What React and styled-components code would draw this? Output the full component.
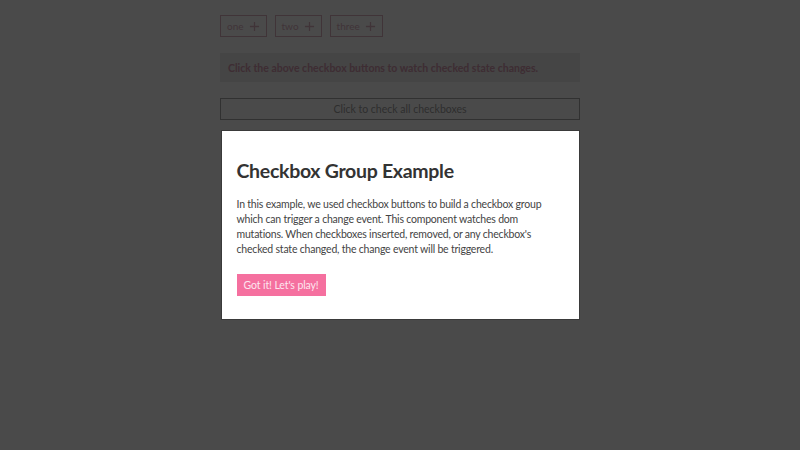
import React from 'react'
import styled, { createGlobalStyle } from 'styled-components'

const GlobalStyle = createGlobalStyle`
  html, body {
    margin: 0;
    padding: 0;
    background: #fff;
    font-family: Lato, 'Open Sans', sans-serif;
  }
`

const PINK = '#f5709f'
const PINK_SOFT = '#dcb2c2'

const Page = styled.div`
  width: 360px;
  margin: 0 auto;
  padding-top: 15px;
`
const Group = styled.div`
  display: flex;
  gap: 8px;
`
const CheckButton = styled.button`
  display: flex;
  align-items: center;
  gap: 5px;
  height: 22px;
  padding: 0 6px;
  border: 1px solid ${PINK_SOFT};
  background: #fff;
  color: ${PINK_SOFT};
  font-family: inherit;
  font-size: 10px;
`
const Status = styled.div`
  margin-top: 16px;
  height: 29px;
  display: flex;
  align-items: center;
  padding: 0 8px;
  background: #ececec;
  color: #d49ab0;
  font-size: 10.5px;
  font-weight: bold;
`
const CheckAll = styled.button`
  display: block;
  width: 100%;
  margin-top: 16px;
  height: 22px;
  border: 1px solid #a8a8a8;
  background: #fff;
  color: #a0a0a0;
  font-family: inherit;
  font-size: 10.5px;
`
const Overlay = styled.div`
  position: fixed;
  inset: 0;
  background: rgba(0, 0, 0, 0.71);
  display: flex;
  align-items: center;
  justify-content: center;
`
const Modal = styled.div`
  box-sizing: border-box;
  width: 359px;
  height: 190px;
  padding: 27px 15px 0;
  background: #fff;
  border: 1px solid #3a3a3a;
`
const Title = styled.h1`
  margin: 0;
  font-size: 19.5px;
  letter-spacing: -0.3px;
  line-height: 26px;
  font-weight: bold;
  color: #333;
`
const Text = styled.p`
  margin: 13px 0 0;
  font-size: 10.5px;
  letter-spacing: -0.2px;
  line-height: 15px;
  color: #444;
`
const PlayButton = styled.button`
  margin-top: 17px;
  height: 22px;
  padding: 0 7px;
  border: none;
  background: ${PINK};
  color: #fde6ef;
  font-family: inherit;
  font-size: 10.5px;
  letter-spacing: -0.1px;
`

const Plus = () => (
  <svg width='11' height='11' viewBox='0 0 12 12'>
    <path d='M6 1v10M1 6h10' stroke='currentColor' strokeWidth='1.4' />
  </svg>
)

const App = () => {
  const names = ['one', 'two', 'three']

  return (
    <>
      <GlobalStyle />
      <Page>
        <Group>
          {names.map(name => (
            <CheckButton key={name}>
              {name} <Plus />
            </CheckButton>
          ))}
        </Group>
        <Status>Click the above checkbox buttons to watch checked state changes.</Status>
        <CheckAll>Click to check all checkboxes</CheckAll>
      </Page>
      <Overlay>
        <Modal>
          <Title>Checkbox Group Example</Title>
          <Text>
            In this example, we used checkbox buttons to build a checkbox group which can
            trigger a change event. This component watches dom mutations. When checkboxes
            inserted, removed, or any checkbox's checked state changed, the change event
            will be triggered.
          </Text>
          <PlayButton>Got it! Let's play!</PlayButton>
        </Modal>
      </Overlay>
    </>
  )
}

export default App
